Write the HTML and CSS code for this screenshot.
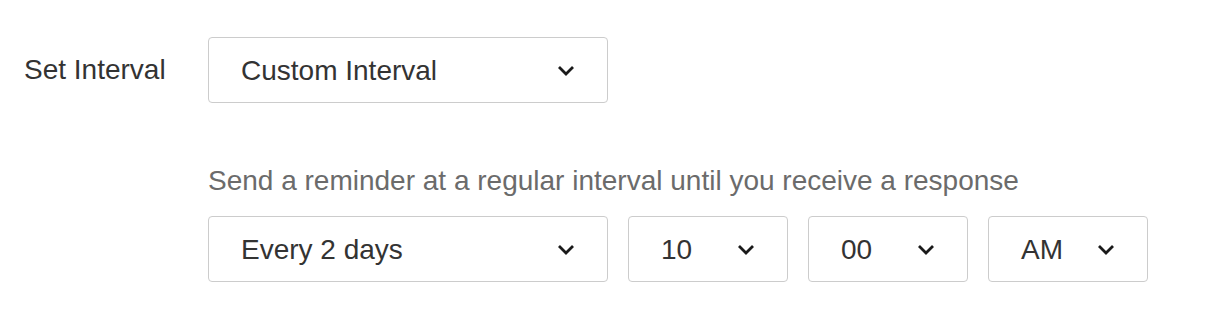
FILE: index.html
```html
<!DOCTYPE html>
<html>
<head>
  <meta charset="UTF-8">
  <title>Reminder Interval</title>
  <link rel="stylesheet" href="styles.css">
</head>
<body>
  <div class="reminder-settings">
    <div class="form-row">
      <div class="form-label">Set Interval</div>
      <div class="select-box select-wide">
        <span class="select-value">Custom Interval</span>
        <svg class="chevron" width="18" height="11" viewBox="0 0 18 11"><path d="M2 2 L9 9 L16 2" fill="none" stroke="#1a1a1a" stroke-width="2.8"/></svg>
      </div>
    </div>

    <div class="interval-detail">
      <div class="help-text">Send a reminder at a regular interval until you receive a response</div>
      <div class="select-group">
        <div class="select-box select-wide">
          <span class="select-value">Every 2 days</span>
          <svg class="chevron" width="18" height="11" viewBox="0 0 18 11"><path d="M2 2 L9 9 L16 2" fill="none" stroke="#1a1a1a" stroke-width="2.8"/></svg>
        </div>
        <div class="select-box select-small">
          <span class="select-value">10</span>
          <svg class="chevron" width="18" height="11" viewBox="0 0 18 11"><path d="M2 2 L9 9 L16 2" fill="none" stroke="#1a1a1a" stroke-width="2.8"/></svg>
        </div>
        <div class="select-box select-small">
          <span class="select-value">00</span>
          <svg class="chevron" width="18" height="11" viewBox="0 0 18 11"><path d="M2 2 L9 9 L16 2" fill="none" stroke="#1a1a1a" stroke-width="2.8"/></svg>
        </div>
        <div class="select-box select-small">
          <span class="select-value">AM</span>
          <svg class="chevron" width="18" height="11" viewBox="0 0 18 11"><path d="M2 2 L9 9 L16 2" fill="none" stroke="#1a1a1a" stroke-width="2.8"/></svg>
        </div>
      </div>
    </div>
  </div>
</body>
</html>
```

FILE: styles.css
```css
body {
  margin: 0;
  font-family: "Liberation Sans", Arial, sans-serif;
  background-color: #fff;
  color: #333;
}

.reminder-settings {
  padding: 37px 24px;
}

.form-row {
  display: flex;
  align-items: center;
}

.form-label {
  width: 184px;
  font-size: 28px;
  color: #333;
}

.select-box {
  display: flex;
  align-items: center;
  justify-content: space-between;
  box-sizing: border-box;
  height: 66px;
  padding: 0 32px 0 32px;
  border: 1px solid #ccc;
  border-radius: 4px;
  background-color: #fff;
}

.select-wide {
  width: 400px;
}

.select-small {
  width: 160px;
}

.select-value {
  font-size: 28px;
  color: #333;
  padding-top: 2px;
}

.chevron {
  display: block;
}

.interval-detail {
  margin-left: 184px;
  margin-top: 62px;
}

.help-text {
  font-size: 28px;
  line-height: 32px;
  color: #6b6b6b;
  margin-bottom: 19px;
}

.select-group {
  display: flex;
  gap: 20px;
}
```
